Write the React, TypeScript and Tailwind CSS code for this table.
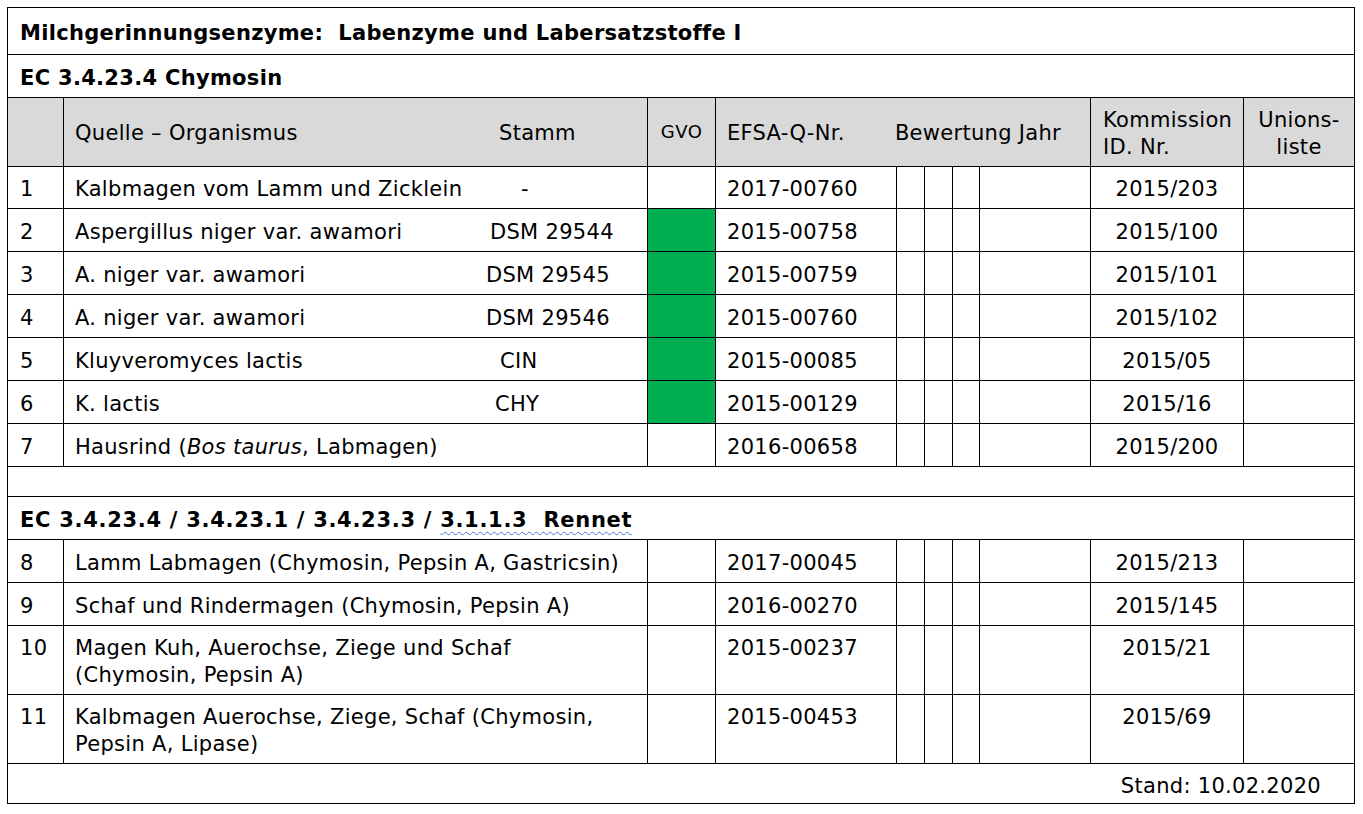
import React from "react";

type Row = {
  nr: string;
  quelle: React.ReactNode;
  stamm?: string;
  stammPad?: string;
  gvo?: boolean;
  efsa: string;
  kom: string;
  tall?: boolean;
  h?: string;
};

const CHYMOSIN: Row[] = [
  { nr: "1", quelle: "Kalbmagen vom Lamm und Zicklein", stamm: "-", stammPad: "pl-[51px]", efsa: "2017-00760", kom: "2015/203", h: "h-[42px]" },
  { nr: "2", quelle: "Aspergillus niger var. awamori", stamm: "DSM 29544", stammPad: "pl-[20px]", gvo: true, efsa: "2015-00758", kom: "2015/100" },
  { nr: "3", quelle: "A. niger var. awamori", stamm: "DSM 29545", stammPad: "pl-[16px]", gvo: true, efsa: "2015-00759", kom: "2015/101" },
  { nr: "4", quelle: "A. niger var. awamori", stamm: "DSM 29546", stammPad: "pl-[16px]", gvo: true, efsa: "2015-00760", kom: "2015/102" },
  { nr: "5", quelle: "Kluyveromyces lactis", stamm: "CIN", stammPad: "pl-[30px]", gvo: true, efsa: "2015-00085", kom: "2015/05" },
  { nr: "6", quelle: "K. lactis", stamm: "CHY", stammPad: "pl-[25px]", gvo: true, efsa: "2015-00129", kom: "2015/16" },
  {
    nr: "7",
    quelle: (
      <>
        Hausrind (<i>Bos taurus</i>, Labmagen)
      </>
    ),
    efsa: "2016-00658",
    kom: "2015/200",
  },
];

const RENNET: Row[] = [
  { nr: "8", quelle: "Lamm Labmagen (Chymosin, Pepsin A, Gastricsin)", efsa: "2017-00045", kom: "2015/213" },
  { nr: "9", quelle: "Schaf und Rindermagen (Chymosin, Pepsin A)", efsa: "2016-00270", kom: "2015/145" },
  {
    nr: "10",
    quelle: (
      <>
        Magen Kuh, Auerochse, Ziege und Schaf
        <br />
        (Chymosin, Pepsin A)
      </>
    ),
    efsa: "2015-00237",
    kom: "2015/21",
    tall: true,
  },
  {
    nr: "11",
    quelle: (
      <>
        Kalbmagen Auerochse, Ziege, Schaf (Chymosin,
        <br />
        Pepsin A, Lipase)
      </>
    ),
    efsa: "2015-00453",
    kom: "2015/69",
    tall: true,
  },
];

function DataRow({ row }: { row: Row }) {
  const height = row.tall ? "h-[69px]" : row.h ?? "h-[43px]";
  const align = row.tall ? "items-start pt-[9px]" : "items-center pt-[4px]";
  return (
    <div className={`flex ${height} border-b border-black`}>
      <div className={`flex ${align} w-[55px] pl-[12px]`}>{row.nr}</div>
      <div className={`flex ${align} w-[584px] border-l border-black pl-[11px]`}>
        {row.stamm !== undefined ? (
          <>
            <span className="w-[395px] shrink-0 whitespace-nowrap">{row.quelle}</span>
            <span className={`${row.stammPad} whitespace-nowrap`}>{row.stamm}</span>
          </>
        ) : (
          <span className="whitespace-nowrap">{row.quelle}</span>
        )}
      </div>
      <div className={`w-[68px] border-l border-black ${row.gvo ? "bg-[#00b050]" : ""}`} />
      <div className={`flex ${align} w-[181px] border-l border-black pl-[11px]`}>{row.efsa}</div>
      <div className="w-[28px] border-l border-black" />
      <div className="w-[28px] border-l border-black" />
      <div className="w-[27px] border-l border-black" />
      <div className="w-[111px] border-l border-black" />
      <div className={`flex ${align} justify-center w-[153px] border-l border-black`}>{row.kom}</div>
      <div className="flex-1 border-l border-black" />
    </div>
  );
}

export default function App() {
  return (
    <div className="min-h-[814px] bg-white pl-[7px] pt-[7px] font-['DejaVu_Sans',Verdana,sans-serif] text-[21px] leading-[27px] tracking-[0.3px] text-black">
      <div className="w-[1348px] border border-black">
        <div className="flex h-[47px] items-center border-b border-black pl-[12px] pt-[4px] font-bold whitespace-pre">
          {"Milchgerinnungsenzyme:  Labenzyme und Labersatzstoffe I"}
        </div>
        <div className="flex h-[43px] items-center border-b border-black pl-[12px] pt-[4px] font-bold">
          EC 3.4.23.4 Chymosin
        </div>

        <div className="flex h-[69px] border-b border-black bg-[#d9d9d9]">
          <div className="w-[55px]" />
          <div className="flex w-[584px] items-center border-l border-black pl-[11px] pt-[3px]">
            <span className="w-[395px] shrink-0">Quelle – Organismus</span>
            <span className="pl-[29px]">Stamm</span>
          </div>
          <div className="flex w-[68px] items-center justify-center border-l border-black pb-[2px] text-[18px] tracking-[0.5px]">
            GVO
          </div>
          <div className="flex w-[375px] items-center border-l border-black pl-[11px] pr-[29px] pt-[3px]">
            <span>EFSA-Q-Nr.</span>
            <span className="ml-auto">Bewertung Jahr</span>
          </div>
          <div className="flex w-[153px] flex-col justify-center border-l border-black pl-[12px] pt-[4px]">
            <span>Kommission</span>
            <span>ID. Nr.</span>
          </div>
          <div className="flex flex-1 flex-col items-center justify-center border-l border-black pt-[4px]">
            <span>Unions-</span>
            <span>liste</span>
          </div>
        </div>

        {CHYMOSIN.map((r) => (
          <DataRow key={r.nr} row={r} />
        ))}

        <div className="h-[30px] border-b border-black" />

        <div className="flex h-[43px] items-center border-b border-black pl-[12px] pt-[4px] font-bold tracking-[0.7px] whitespace-pre">
          <span>{"EC 3.4.23.4 / 3.4.23.1 / 3.4.23.3 / "}</span>
          <span className="underline decoration-[#4a7bd8] decoration-wavy decoration-1 underline-offset-[4px]">
            {"3.1.1.3  Rennet"}
          </span>
        </div>

        {RENNET.map((r) => (
          <DataRow key={r.nr} row={r} />
        ))}

        <div className="flex h-[39px] items-center justify-end pr-[33px] pt-[5px]">Stand: 10.02.2020</div>
      </div>
    </div>
  );
}
